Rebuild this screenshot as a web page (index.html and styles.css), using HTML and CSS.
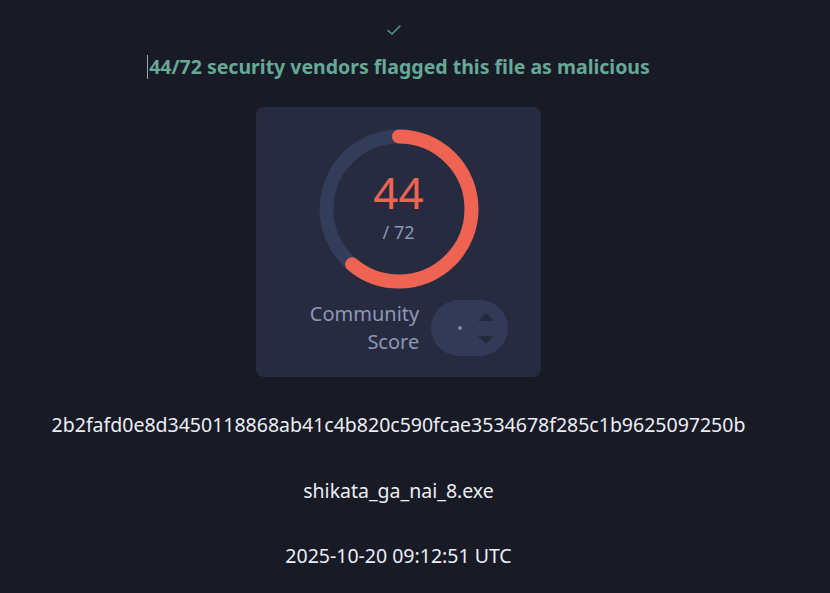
FILE: index.html
```html
<!DOCTYPE html>
<html lang="en">
<head>
<meta charset="utf-8">
<title>Detection</title>
<link rel="stylesheet" href="styles.css">
</head>
<body>
<main class="page">
  <div class="check">
    <svg width="16" height="12" viewBox="0 0 16 12"><path d="M2 6.5 L6 10 L14 2" fill="none" stroke="#5f9e8f" stroke-width="1.4" stroke-linecap="round" stroke-linejoin="round"/></svg>
  </div>
  <h1 class="headline"><span class="caret"></span>44/72 security vendors flagged this file as malicious</h1>
  <section class="card">
    <div class="ring">
      <svg width="160" height="160" viewBox="0 0 160 160">
        <circle cx="80" cy="80" r="72.5" fill="none" stroke="#333c58" stroke-width="14"/>
        <circle cx="80" cy="80" r="72.5" fill="none" stroke="#ee6352" stroke-width="14" stroke-linecap="round" stroke-dasharray="278.3 500" transform="rotate(-90 80 80)"/>
      </svg>
      <div class="ring-text">
        <div class="score">44</div>
        <div class="total">/ 72</div>
      </div>
    </div>
    <div class="community">
      <div class="community-label">Community<br>Score</div>
      <div class="pill">
        <span class="dot"></span>
        <span class="arrows"><span class="up"></span><span class="down"></span></span>
      </div>
    </div>
  </section>
  <p class="hash">2b2fafd0e8d3450118868ab41c4b820c590fcae3534678f285c1b9625097250b</p>
  <p class="filename">shikata_ga_nai_8.exe</p>
  <p class="date">2025-10-20 09:12:51 UTC</p>
</main>
</body>
</html>
```

FILE: styles.css
```css
html, body {
  margin: 0;
  padding: 0;
  background: #181a26;
}
body {
  width: 830px;
  height: 593px;
  overflow: hidden;
  font-family: "Noto Sans", "DejaVu Sans", sans-serif;
}
.page {
  width: 797px;
  display: flex;
  flex-direction: column;
  align-items: center;
}
.check {
  margin-top: 24px;
  height: 12px;
  display: flex;
  justify-content: center;
  padding-right: 10px;
}
.headline {
  margin: 18px 0 0;
  font-size: 19.5px;
  font-weight: 700;
  color: #67a896;
  line-height: 26px;
  display: flex;
  align-items: center;
}
.caret {
  display: inline-block;
  width: 1px;
  height: 24px;
  background: #9aa6b0;
  margin-right: 1px;
}
.card {
  margin-top: 27px;
  width: 285px;
  height: 270px;
  box-sizing: border-box;
  background: #262b3f;
  border-radius: 8px;
  display: flex;
  flex-direction: column;
  align-items: center;
  padding-top: 22px;
}
.ring {
  position: relative;
  width: 160px;
  height: 160px;
}
.ring svg { display: block; }
.ring-text {
  position: absolute;
  inset: 0;
  display: flex;
  flex-direction: column;
  align-items: center;
  justify-content: center;
}
.score {
  font-size: 44px;
  line-height: 40px;
  color: #ec6452;
  margin-top: -4px;
}
.total {
  font-size: 18px;
  line-height: 20px;
  color: #8d97b8;
  margin-top: 10px;
}
.community {
  margin-top: 11px;
  display: flex;
  align-items: center;
  gap: 12px;
  padding-left: 21px;
}
.community-label {
  text-align: right;
  font-size: 20px;
  line-height: 28px;
  color: #8d97b8;
}
.pill {
  width: 77px;
  height: 56px;
  border-radius: 28px;
  background: #333a57;
  display: flex;
  align-items: center;
}
.dot {
  width: 4px;
  height: 4px;
  border-radius: 50%;
  background: #7d86a6;
  margin-left: 27px;
}
.arrows {
  display: flex;
  flex-direction: column;
  gap: 15px;
  margin-left: 16px;
}
.up {
  width: 0;
  height: 0;
  border-left: 8px solid transparent;
  border-right: 8px solid transparent;
  border-bottom: 8px solid #242a3d;
}
.down {
  width: 0;
  height: 0;
  border-left: 8px solid transparent;
  border-right: 8px solid transparent;
  border-top: 8px solid #242a3d;
}
.hash, .filename, .date {
  margin: 0;
  color: #eceef4;
  font-size: 19.5px;
  line-height: 26px;
}
.hash { margin-top: 35px; }
.filename { margin-top: 40px; }
.date { margin-top: 39px; }
```
